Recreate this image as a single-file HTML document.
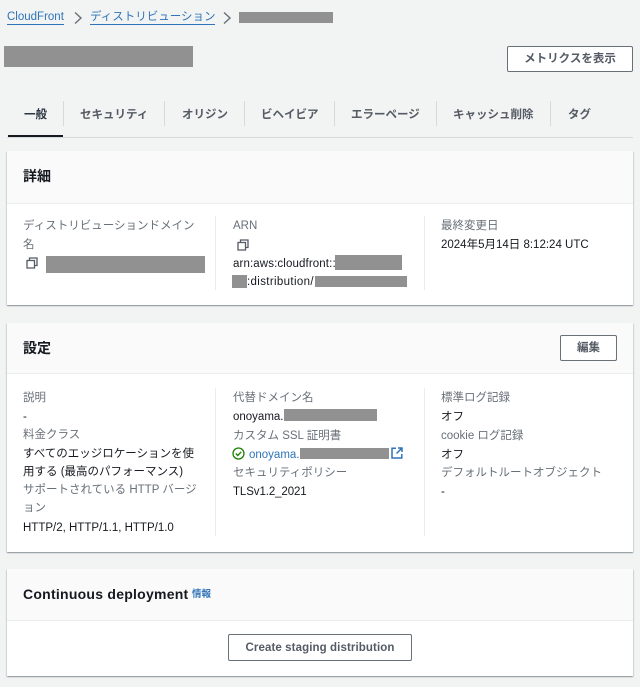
<!DOCTYPE html>
<html lang="ja"><head><meta charset="utf-8">
<style>
html,body{margin:0;padding:0}
body{width:640px;height:687px;overflow:hidden;background:#f2f3f3;position:relative;font-family:"Liberation Sans","Noto Sans CJK JP",sans-serif;font-size:11.5px;color:#16191f}
.t{position:absolute;white-space:nowrap;line-height:18px;height:18px}
.l{color:#687078}
.b{position:absolute;background:#919191}
.card{position:absolute;left:7px;width:626px;background:#fff;box-shadow:0 1px 1px 0 rgba(0,28,36,.3),1px 1px 1px 0 rgba(0,28,36,.1),-1px 1px 1px 0 rgba(0,28,36,.1)}
.hd{position:absolute;left:0;top:0;width:626px;background:#fafafa;border-bottom:1px solid #eaeded}
.v{position:absolute;width:1px;background:#eaeded}
.btn{position:absolute;box-sizing:border-box;background:#fff;border:1px solid #687078;border-radius:2px;color:#545b64;font-weight:bold;text-align:center;font-size:11.5px}
.tab{position:absolute;top:106px;height:18px;line-height:18px;color:#545b64;font-weight:bold;white-space:nowrap;font-size:11.5px}
.sep{position:absolute;top:101px;height:25px;width:1px;background:#d5dbdb}
svg{position:absolute;display:block}
</style></head><body>

<div class="t" style="left:7px;top:9px;color:#2f74b8;border-bottom:1px solid #2f74b8;height:15px;line-height:17px">CloudFront</div>
<svg style="left:73px;top:11px" width="10" height="14" viewBox="0 0 10 14"><path d="M2 1.5 L8 7 L2 12.5" fill="none" stroke="#687078" stroke-width="1.4"/></svg>
<div class="t" style="left:90px;top:9px;color:#2f74b8;border-bottom:1px solid #2f74b8;height:15px;line-height:17px">ディストリビューション</div>
<svg style="left:222px;top:11px" width="10" height="14" viewBox="0 0 10 14"><path d="M2 1.5 L8 7 L2 12.5" fill="none" stroke="#687078" stroke-width="1.4"/></svg>
<div class="b" style="left:239px;top:12px;width:94px;height:11px"></div>

<div class="b" style="left:4px;top:46px;width:189px;height:21px"></div>
<div class="btn" style="left:507px;top:46px;width:126px;height:26px;line-height:25px">メトリクスを表示</div>

<div style="position:absolute;left:7px;top:137px;width:626px;height:1px;background:#d5dbdb"></div>
<div style="position:absolute;left:8px;top:135px;width:55px;height:2px;background:#16191f"></div>
<div class="tab" style="left:24px;color:#2b3540">一般</div>
<div class="sep" style="left:63px"></div>
<div class="tab" style="left:80px">セキュリティ</div>
<div class="sep" style="left:164px"></div>
<div class="tab" style="left:182px">オリジン</div>
<div class="sep" style="left:244px"></div>
<div class="tab" style="left:261px">ビヘイビア</div>
<div class="sep" style="left:334px"></div>
<div class="tab" style="left:351px">エラーページ</div>
<div class="sep" style="left:436px"></div>
<div class="tab" style="left:453px">キャッシュ削除</div>
<div class="sep" style="left:550px"></div>
<div class="tab" style="left:568px">タグ</div>

<!-- 詳細 -->
<div class="card" style="top:151px;height:154px">
  <div class="hd" style="height:52px"></div>
  <div class="v" style="left:208px;top:65px;height:74px"></div>
  <div class="v" style="left:417px;top:65px;height:74px"></div>
</div>
<div class="t" style="left:23px;top:167px;font-size:14px;font-weight:bold">詳細</div>
<div class="t l" style="left:23px;top:217px">ディストリビューションドメイン</div>
<div class="t l" style="left:23px;top:236px">名</div>
<svg style="left:26px;top:257px" width="12" height="12" viewBox="0 0 12 12"><path d="M3.5 3V1H11V8.5H8.5M1 3.5H8.5V11H1Z" fill="none" stroke="#545b64" stroke-width="1.3"/></svg>
<div class="b" style="left:46px;top:256px;width:159px;height:17px"></div>

<div class="t l" style="left:233px;top:217px">ARN</div>
<svg style="left:237px;top:239px" width="12" height="12" viewBox="0 0 12 12"><path d="M3.5 3V1H11V8.5H8.5M1 3.5H8.5V11H1Z" fill="none" stroke="#545b64" stroke-width="1.3"/></svg>
<div class="t" style="left:233px;top:255px;letter-spacing:.12px">arn:aws:cloudfront::</div>
<div class="b" style="left:335px;top:255px;width:67px;height:15px"></div>
<div class="b" style="left:232px;top:275px;width:15px;height:13px"></div>
<div class="t" style="left:247px;top:273px;letter-spacing:.35px">:distribution/</div>
<div class="b" style="left:315px;top:276px;width:92px;height:11px"></div>

<div class="t l" style="left:441px;top:217px">最終変更日</div>
<div class="t" style="left:441px;top:236px">2024年5月14日 8:12:24 UTC</div>

<!-- 設定 -->
<div class="card" style="top:323px;height:229px">
  <div class="hd" style="height:50px"></div>
  <div class="v" style="left:208px;top:65px;height:148px"></div>
  <div class="v" style="left:417px;top:65px;height:148px"></div>
</div>
<div class="t" style="left:23px;top:339px;font-size:14px;font-weight:bold">設定</div>
<div class="btn" style="left:560px;top:335px;width:57px;height:26px;line-height:25px">編集</div>

<div class="t l" style="left:23px;top:389px">説明</div>
<div class="t" style="left:23px;top:408px">-</div>
<div class="t l" style="left:23px;top:426px">料金クラス</div>
<div class="t" style="left:23px;top:445px">すべてのエッジロケーションを使</div>
<div class="t" style="left:23px;top:463px">用する (最高のパフォーマンス)</div>
<div class="t l" style="left:23px;top:481px">サポートされている HTTP バージ</div>
<div class="t l" style="left:23px;top:499px">ョン</div>
<div class="t" style="left:23px;top:519px">HTTP/2, HTTP/1.1, HTTP/1.0</div>

<div class="t l" style="left:233px;top:389px">代替ドメイン名</div>
<div class="t" style="left:233px;top:408px">onoyama.</div>
<div class="b" style="left:284px;top:409px;width:93px;height:12px"></div>
<div class="t l" style="left:233px;top:427px">カスタム SSL 証明書</div>
<svg style="left:232px;top:447px" width="13" height="13" viewBox="0 0 13 13"><circle cx="6.5" cy="6.5" r="5.5" fill="none" stroke="#1d8102" stroke-width="1.3"/><path d="M3.8 6.5 L5.8 8.5 L9.2 4.8" fill="none" stroke="#1d8102" stroke-width="1.3"/></svg>
<div class="t" style="left:249px;top:446px;color:#2f74b8">onoyama.</div>
<div class="b" style="left:300px;top:448px;width:89px;height:11px"></div>
<svg style="left:391px;top:447px" width="12" height="12" viewBox="0 0 12 12"><path d="M5 1.2H1V11H10.8V7M7 1H11V5M11 1L5.5 6.5" fill="none" stroke="#2f74b8" stroke-width="1.5"/></svg>
<div class="t l" style="left:233px;top:464px">セキュリティポリシー</div>
<div class="t" style="left:233px;top:483px;letter-spacing:-.1px">TLSv1.2_2021</div>

<div class="t l" style="left:441px;top:389px">標準ログ記録</div>
<div class="t" style="left:441px;top:408px">オフ</div>
<div class="t l" style="left:441px;top:427px">cookie ログ記録</div>
<div class="t" style="left:441px;top:446px">オフ</div>
<div class="t l" style="left:441px;top:464px">デフォルトルートオブジェクト</div>
<div class="t" style="left:441px;top:483px">-</div>

<!-- Continuous deployment -->
<div class="card" style="top:569px;height:107px">
  <div class="hd" style="height:51px"></div>
</div>
<div class="t" style="left:23px;top:585px;font-size:14px;font-weight:bold;letter-spacing:.25px">Continuous deployment</div>
<div class="t" style="left:192px;top:586px;font-size:9.5px;color:#2f74b8;font-weight:bold">情報</div>
<div class="btn" style="left:228px;top:634px;width:184px;height:27px;line-height:26px;font-size:11.5px;letter-spacing:.1px">Create staging distribution</div>

</body></html>
